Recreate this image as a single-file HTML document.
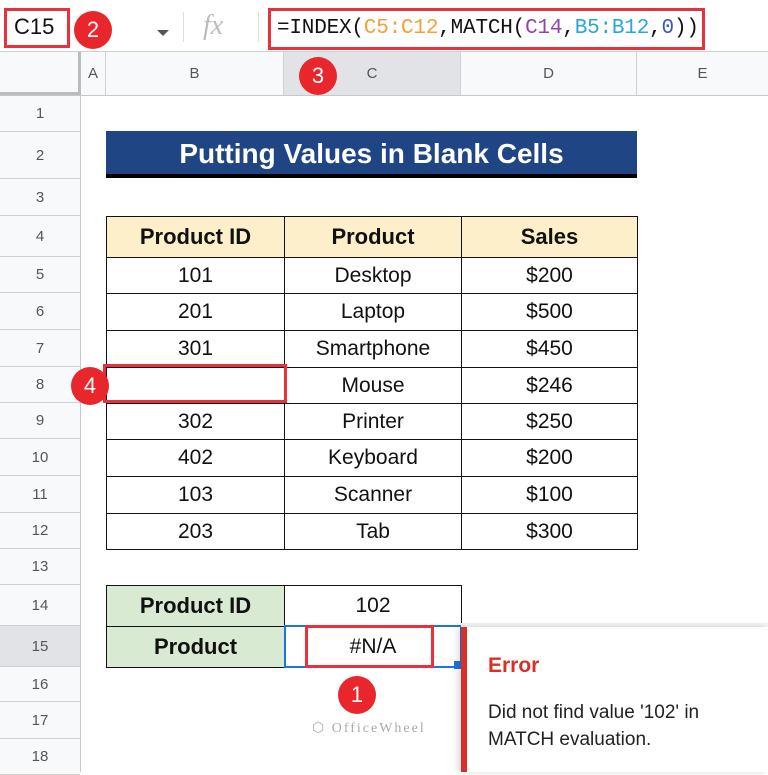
<!DOCTYPE html>
<html><head><style>
*{margin:0;padding:0;box-sizing:border-box}
body{width:768px;height:772px;overflow:hidden;background:#fff;font-family:"Liberation Sans",Arial,sans-serif;position:relative}
.a{position:absolute}
.rh{position:absolute;left:0;width:80px;text-align:center;color:#555;font-size:15px;border-bottom:1px solid #d0d0d0;background:#f8f9fa}
.ch{position:absolute;top:52px;height:43px;line-height:43px;text-align:center;color:#555;font-size:15px;border-right:1px solid #d0d0d0;background:#f8f9fa}
.c{position:absolute;text-align:center;font-size:21px;color:#111;border:1px solid #111;display:flex;align-items:center;justify-content:center}
.b{font-weight:bold;font-size:22px}
.circ{position:absolute;width:38px;height:38px;border-radius:50%;background:#e8262c;color:#fff;font-size:22px;text-align:center;line-height:38px}
.red{position:absolute;border:3px solid #e8313a}
</style></head><body>
<div class="a" style="left:0;top:0;width:768px;height:52px;background:#fff;border-bottom:1px solid #d0d0d0"></div>
<div class="a" style="left:14px;top:14px;font-size:22px;color:#111">C15</div>
<div class="red" style="left:4px;top:8px;width:66px;height:40px"></div>
<div class="circ" style="left:74px;top:11px">2</div>
<div class="a" style="left:157px;top:30px;width:0;height:0;border-left:6px solid transparent;border-right:6px solid transparent;border-top:6px solid #555"></div>
<div class="a" style="left:183px;top:12px;width:1px;height:30px;background:#ddd"></div>
<div class="a" style="left:203px;top:10px;font-family:'Liberation Serif',serif;font-style:italic;font-size:28px;color:#bbb">fx</div>
<div class="a" style="left:258px;top:12px;width:1px;height:30px;background:#ddd"></div>
<div class="a" style="left:277px;top:17px;font-family:'Liberation Mono',monospace;font-size:21px;color:#111;letter-spacing:-0.2px">=INDEX(<span style="color:#f3a037">C5:C12</span>,MATCH(<span style="color:#8e44ad">C14</span>,<span style="color:#2aa7d8">B5:B12</span>,<span style="color:#3b57c4">0</span>))</div>
<div class="red" style="left:268px;top:8px;width:437px;height:42px"></div>
<div class="a" style="left:0;top:52px;width:81px;height:43px;background:#f8f9fa;border-right:3px solid #bbb;border-bottom:3px solid #bbb"></div>
<div class="ch" style="left:81px;width:25px">A</div>
<div class="ch" style="left:106px;width:178px">B</div>
<div class="ch" style="left:284px;width:177px;background:#e1e3e7">C</div>
<div class="ch" style="left:461px;width:176px">D</div>
<div class="ch" style="left:637px;width:131px;border-right:none">E</div>
<div class="a" style="left:0;top:95px;width:768px;height:1px;background:#c8c8c8"></div>
<div class="a" style="left:80px;top:95px;width:1px;height:677px;background:#c8c8c8"></div>
<div class="circ" style="left:299px;top:57px">3</div>
<div class="rh" style="top:96px;height:36px;line-height:36px">1</div>
<div class="rh" style="top:132px;height:47px;line-height:47px">2</div>
<div class="rh" style="top:179px;height:37px;line-height:37px">3</div>
<div class="rh" style="top:216px;height:41px;line-height:41px">4</div>
<div class="rh" style="top:257px;height:36px;line-height:36px">5</div>
<div class="rh" style="top:293px;height:37px;line-height:37px">6</div>
<div class="rh" style="top:330px;height:37px;line-height:37px">7</div>
<div class="rh" style="top:367px;height:36px;line-height:36px">8</div>
<div class="rh" style="top:403px;height:36px;line-height:36px">9</div>
<div class="rh" style="top:439px;height:37px;line-height:37px">10</div>
<div class="rh" style="top:476px;height:37px;line-height:37px">11</div>
<div class="rh" style="top:513px;height:36px;line-height:36px">12</div>
<div class="rh" style="top:549px;height:36px;line-height:36px">13</div>
<div class="rh" style="top:585px;height:41px;line-height:41px">14</div>
<div class="rh" style="top:626px;height:41px;line-height:41px;background:#e1e3e7">15</div>
<div class="rh" style="top:667px;height:35px;line-height:35px">16</div>
<div class="rh" style="top:702px;height:37px;line-height:37px">17</div>
<div class="rh" style="top:739px;height:36px;line-height:36px">18</div>
<div class="a" style="left:106px;top:131px;width:531px;height:47px;background:#1f4584;border-bottom:4px solid #000;color:#fff;font-weight:bold;font-size:28px;text-align:center;line-height:45px">Putting Values in Blank Cells</div>
<div class="c b" style="left:106px;top:216px;width:179px;height:42px;background:#fdefc9">Product ID</div>
<div class="c b" style="left:284px;top:216px;width:178px;height:42px;background:#fdefc9">Product</div>
<div class="c b" style="left:461px;top:216px;width:177px;height:42px;background:#fdefc9">Sales</div>
<div class="c" style="left:106px;top:257px;width:179px;height:37px">101</div><div class="c" style="left:284px;top:257px;width:178px;height:37px">Desktop</div><div class="c" style="left:461px;top:257px;width:177px;height:37px">$200</div>
<div class="c" style="left:106px;top:293px;width:179px;height:38px">201</div><div class="c" style="left:284px;top:293px;width:178px;height:38px">Laptop</div><div class="c" style="left:461px;top:293px;width:177px;height:38px">$500</div>
<div class="c" style="left:106px;top:330px;width:179px;height:38px">301</div><div class="c" style="left:284px;top:330px;width:178px;height:38px">Smartphone</div><div class="c" style="left:461px;top:330px;width:177px;height:38px">$450</div>
<div class="c" style="left:106px;top:367px;width:179px;height:37px"></div><div class="c" style="left:284px;top:367px;width:178px;height:37px">Mouse</div><div class="c" style="left:461px;top:367px;width:177px;height:37px">$246</div>
<div class="c" style="left:106px;top:403px;width:179px;height:37px">302</div><div class="c" style="left:284px;top:403px;width:178px;height:37px">Printer</div><div class="c" style="left:461px;top:403px;width:177px;height:37px">$250</div>
<div class="c" style="left:106px;top:439px;width:179px;height:38px">402</div><div class="c" style="left:284px;top:439px;width:178px;height:38px">Keyboard</div><div class="c" style="left:461px;top:439px;width:177px;height:38px">$200</div>
<div class="c" style="left:106px;top:476px;width:179px;height:38px">103</div><div class="c" style="left:284px;top:476px;width:178px;height:38px">Scanner</div><div class="c" style="left:461px;top:476px;width:177px;height:38px">$100</div>
<div class="c" style="left:106px;top:513px;width:179px;height:37px">203</div><div class="c" style="left:284px;top:513px;width:178px;height:37px">Tab</div><div class="c" style="left:461px;top:513px;width:177px;height:37px">$300</div>
<div class="red" style="left:103px;top:364px;width:184px;height:39px"></div>
<div class="circ" style="left:71px;top:367px">4</div>
<div class="c b" style="left:106px;top:585px;width:179px;height:42px;background:#d9ead3">Product ID</div>
<div class="c" style="left:284px;top:585px;width:178px;height:42px">102</div>
<div class="c b" style="left:106px;top:626px;width:179px;height:42px;background:#d9ead3">Product</div>
<div class="c" style="left:284px;top:626px;width:178px;height:42px">#N/A</div>
<div class="a" style="left:284px;top:625px;width:178px;height:43px;border:2px solid #1a73e8"></div>
<div class="a" style="left:454px;top:661px;width:8px;height:8px;background:#1a73e8"></div>
<div class="red" style="left:305px;top:625px;width:129px;height:43px"></div>
<div class="circ" style="left:338px;top:676px">1</div>
<div class="a" style="left:312px;top:720px;font-family:'Liberation Serif',serif;font-size:14px;letter-spacing:2px;color:#aaa">⬡ OfficeWheel</div>
<div class="a" style="left:461px;top:623px;width:307px;height:6px;background:#f3f3f3"></div>
<div class="a" style="left:461px;top:627px;width:307px;height:145px;background:#fff;border-left:6px solid #d93025;box-shadow:-3px 0 6px rgba(0,0,0,.15)"></div>
<div class="a" style="left:488px;top:654px;font-size:21px;font-weight:bold;color:#d93025">Error</div>
<div class="a" style="left:488px;top:699px;font-size:19px;line-height:27px;color:#222">Did not find value '102' in<br>MATCH evaluation.</div>
</body></html>
